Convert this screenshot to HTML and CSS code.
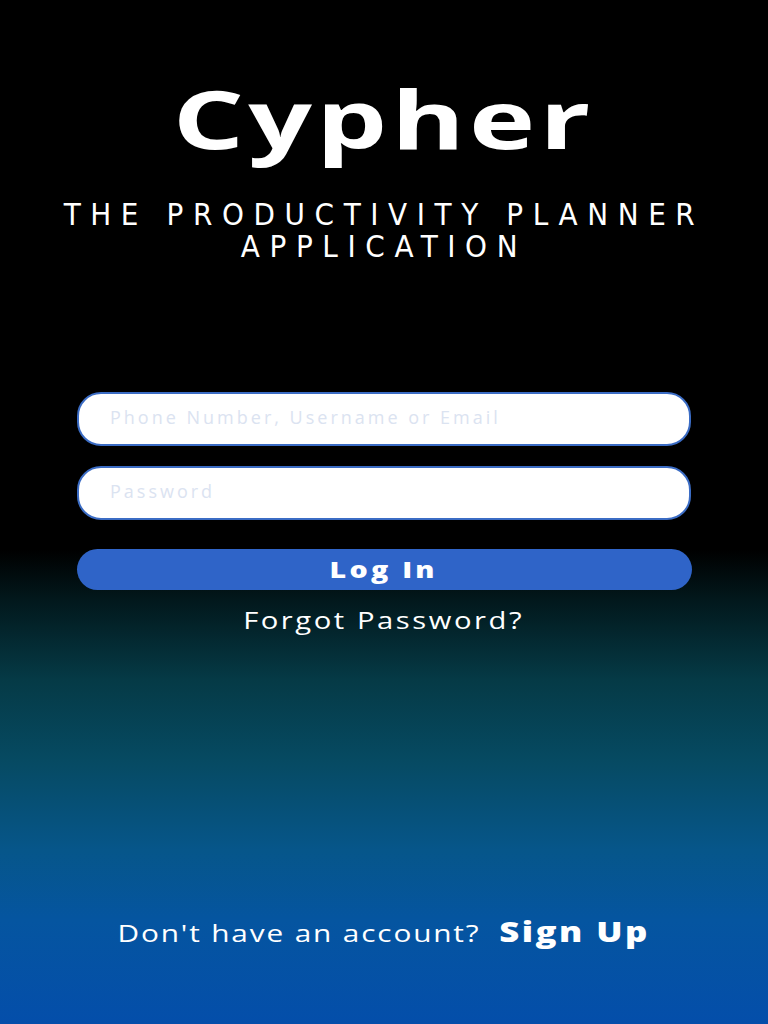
FILE: index.html
```html
<!DOCTYPE html>
<html lang="en">
<head>
<meta charset="utf-8">
<title>Cypher</title>
<link rel="stylesheet" href="styles.css">
</head>
<body>
<main class="screen">
  <header class="brand">
    <h1 class="logo">Cypher</h1>
    <p class="tagline">THE PRODUCTIVITY PLANNER<br>APPLICATION</p>
  </header>
  <form class="login">
    <input class="field" type="text" placeholder="Phone Number, Username or Email">
    <input class="field" type="password" placeholder="Password">
    <button class="btn" type="button"><span class="btn-label">Log In</span></button>
    <a class="forgot" href="#">Forgot Password?</a>
  </form>
  <footer class="signup">
    <span class="signup-text">Don't have an account?</span>
    <a class="signup-link" href="#">Sign Up</a>
  </footer>
</main>
</body>
</html>
```
FILE: styles.css
```css
html, body {
  margin: 0;
  padding: 0;
}
body {
  width: 768px;
  height: 1024px;
  overflow: hidden;
  background: linear-gradient(to bottom,
    #000 0px, #000 550px, #02181c 600px, #053a46 680px,
    #064a62 760px, #06568a 850px, #0555a0 920px, #044eaa 1024px);
  font-family: "Open Sans", "Noto Sans", sans-serif;
  color: #fff;
}
.screen {
  height: 1024px;
  display: flex;
  flex-direction: column;
  align-items: center;
}
.brand {
  display: flex;
  flex-direction: column;
  align-items: center;
  padding-top: 68px;
}
.logo {
  margin: 0;
  font-family: "Open Sans", sans-serif;
  font-weight: 700;
  font-size: 80px;
  line-height: 100px;
  letter-spacing: 3px;
  transform: scaleX(1.4);
}
.tagline {
  margin: 30px 0 0;
  font-family: "Liberation Sans Narrow", "DejaVu Sans Condensed", sans-serif;
  font-weight: 500;
  font-size: 31px;
  line-height: 32px;
  letter-spacing: 9.6px;
  text-align: center;
}
.login {
  margin-top: 130px;
  width: 615px;
  display: flex;
  flex-direction: column;
  align-items: center;
}
.field {
  box-sizing: border-box;
  width: 614px;
  height: 54px;
  margin-bottom: 20px;
  border: 2.5px solid #3b6cc4;
  border-radius: 24px;
  background: #fff;
  padding: 0 0 5px 31px;
  font-family: "Open Sans", sans-serif;
  font-size: 18px;
  letter-spacing: 3px;
  color: #223;
  outline: none;
}
.field::placeholder {
  color: #dbe3f1;
}
.btn {
  margin-top: 9px;
  width: 615px;
  height: 41px;
  border: 0;
  border-radius: 21px;
  background: #2f64c8;
  color: #fff;
  font-family: "Open Sans", sans-serif;
  font-weight: 800;
  font-size: 22px;
  padding: 0 0 2px;
}
.btn-label {
  display: inline-block;
  letter-spacing: 2.5px;
  transform: scaleX(1.3);
}
.forgot {
  display: inline-block;
  margin-top: 14px;
  color: #fff;
  text-decoration: none;
  font-family: "Open Sans", sans-serif;
  font-size: 23px;
  letter-spacing: 2px;
  line-height: 32px;
  transform: scaleX(1.27);
}
.signup {
  margin-top: auto;
  margin-bottom: 74px;
  display: flex;
  align-items: baseline;
  gap: 15px;
  transform: scaleX(1.24);
}
.signup-text {
  font-size: 24px;
  letter-spacing: 1.5px;
}
.signup-link {
  color: #fff;
  text-decoration: none;
  font-weight: 800;
  font-size: 28px;
  letter-spacing: 2px;
}
```
